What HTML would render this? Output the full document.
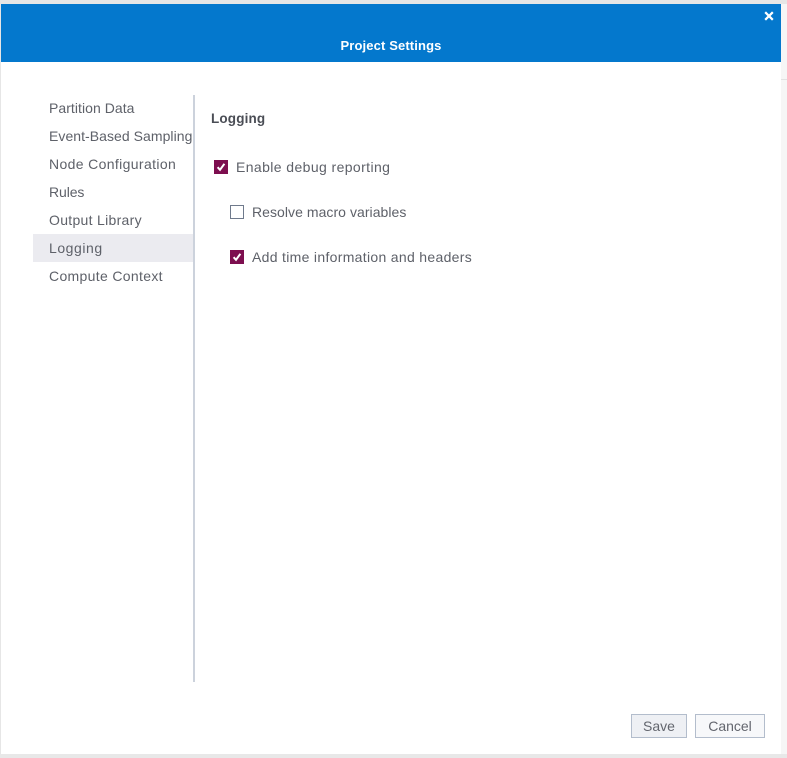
<!DOCTYPE html>
<html>
<head>
<meta charset="utf-8">
<style>
html,body{margin:0;padding:0;}
body{width:787px;height:758px;position:relative;overflow:hidden;background:#fff;font-family:"Liberation Sans",sans-serif;color:#4a4d55;}
div,span{position:absolute;white-space:nowrap;}
.t{font-size:14px;line-height:18px;height:18px;color:#5e6169;}
.cb{width:14px;height:14px;}
.off{box-sizing:border-box;border:1px solid #6f7a8c;background:#fff;}
.on{background:#7d0e4f;}
.btn{box-sizing:border-box;height:24px;top:714px;border:1px solid #b3bdcc;text-align:center;font-size:14px;line-height:22px;color:#63666e;}
</style>
</head>
<body>
<div style="left:0;top:0;width:787px;height:4px;background:#e6e6e6"></div>
<div style="left:0;top:4px;width:1px;height:754px;background:#e6e6e6"></div>
<div style="left:781px;top:4px;width:6px;height:754px;background:#f6f6f6"></div>
<div style="left:781px;top:79px;width:6px;height:1px;background:#e2e2e2"></div>
<div style="left:0;top:754px;width:787px;height:4px;background:#e8e8e8"></div>
<div style="left:1px;top:4px;width:780px;height:750px;background:#fff"></div>
<div style="left:1px;top:4px;width:780px;height:58px;background:#0478cd"></div>
<div style="left:1px;top:37px;width:780px;text-align:center;font-size:13px;font-weight:bold;line-height:18px;color:#fff;letter-spacing:.13px">Project Settings</div>
<svg style="position:absolute;left:764px;top:11px" width="10" height="10" viewBox="0 0 10 10"><path d="M1.2 1.2L8.8 8.8M8.8 1.2L1.2 8.8" stroke="#fff" stroke-width="2.2" fill="none"/></svg>

<div style="left:33px;top:234px;width:160px;height:28px;background:#ebebf0"></div>
<div style="left:193px;top:95px;width:2px;height:587px;background:#ccd2dc"></div>

<div class="t" style="left:49px;top:99px;letter-spacing:.05px">Partition Data</div>
<div class="t" style="left:49px;top:127px;letter-spacing:.05px">Event-Based Sampling</div>
<div class="t" style="left:49px;top:155px;letter-spacing:.36px">Node Configuration</div>
<div class="t" style="left:49px;top:183px;letter-spacing:-.1px">Rules</div>
<div class="t" style="left:49px;top:211px;letter-spacing:.3px">Output Library</div>
<div class="t" style="left:49px;top:239px;letter-spacing:.55px">Logging</div>
<div class="t" style="left:49px;top:267px;letter-spacing:.33px">Compute Context</div>

<div style="left:211px;top:110px;font-size:13.5px;font-weight:bold;line-height:18px;color:#4a4d55;letter-spacing:.15px">Logging</div>

<div class="cb on" style="left:214px;top:160px"><svg style="position:absolute;left:0;top:0" width="14" height="14" viewBox="0 0 14 14"><path d="M3.6 7.2L6 9.8L10.4 3.8" stroke="#fff" stroke-width="2" fill="none"/></svg></div>
<div class="t" style="left:236px;top:158px;letter-spacing:.4px">Enable debug reporting</div>

<div class="cb off" style="left:230px;top:205px"></div>
<div class="t" style="left:252px;top:203px;letter-spacing:.05px">Resolve macro variables</div>

<div class="cb on" style="left:230px;top:250px"><svg style="position:absolute;left:0;top:0" width="14" height="14" viewBox="0 0 14 14"><path d="M3.6 7.2L6 9.8L10.4 3.8" stroke="#fff" stroke-width="2" fill="none"/></svg></div>
<div class="t" style="left:252px;top:248px;letter-spacing:.31px">Add time information and headers</div>

<div class="btn" style="left:631px;width:56px;background:#eef0f4">Save</div>
<div class="btn" style="left:695px;width:70px;background:#f7f8fa">Cancel</div>
</body>
</html>
